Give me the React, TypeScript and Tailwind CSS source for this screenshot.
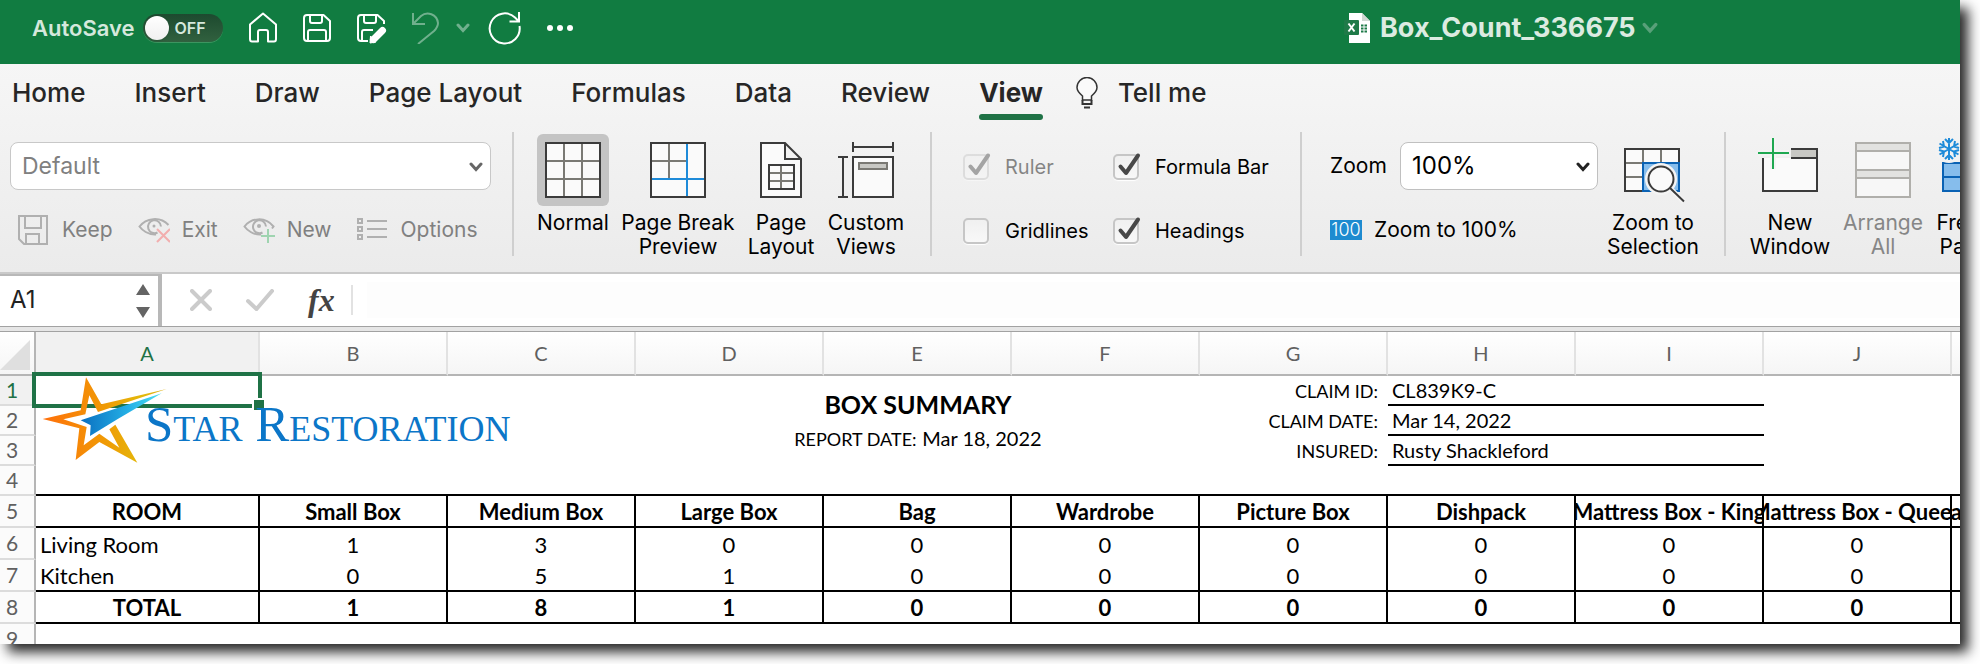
import type { ReactNode } from "react";

const TABS = ["Home", "Insert", "Draw", "Page Layout", "Formulas", "Data", "Review", "View"];

const COLUMNS = ["A", "B", "C", "D", "E", "F", "G", "H", "I", "J", "K"];

const BOX_TYPES = [
  "Small Box",
  "Medium Box",
  "Large Box",
  "Bag",
  "Wardrobe",
  "Picture Box",
  "Dishpack",
  "Mattress Box - King",
  "Mattress Box - Queen",
  "Mattress Box - Cal King",
];

const ROOMS = [
  { name: "Living Room", counts: [1, 3, 0, 0, 0, 0, 0, 0, 0, 0] },
  { name: "Kitchen", counts: [0, 5, 1, 0, 0, 0, 0, 0, 0, 0] },
];

const TOTALS = [1, 8, 1, 0, 0, 0, 0, 0, 0, 0];

const CLAIM = [
  { label: "CLAIM ID:", value: "CL839K9-C" },
  { label: "CLAIM DATE:", value: "Mar 14, 2022" },
  { label: "INSURED:", value: "Rusty Shackleford" },
];

function Chevron({ className }: { className: string }) {
  return (
    <svg viewBox="0 0 14 10" fill="none" stroke="currentColor" strokeWidth="3" className={className} aria-hidden>
      <path d="M2 2l5 5.500 5-5.500" strokeLinecap="round" />
    </svg>
  );
}

function TitleBar() {
  return (
    <header className="flex h-16 items-start bg-[#117c41] text-white">
      <div className="flex h-14 flex-1 items-center pl-8">
        <label htmlFor="autosave" className="text-[22px] font-semibold text-[#d5e8dc]">
          AutoSave
        </label>
        <button
          id="autosave"
          type="button"
          role="switch"
          aria-checked="false"
          className="ml-2 flex h-7 w-20 items-center rounded-full bg-gradient-to-b from-[#1d4a2f] to-[#31613f] pl-0.5 text-base font-semibold text-[#d5e8dc] shadow-[0_1px_0_#3c9560]"
        >
          <span className="mr-1.5 size-6 rounded-full bg-gradient-to-b from-white to-[#f0f0f0] shadow" />
          OFF
        </button>
        <button type="button" aria-label="Home" className="ml-6">
          <svg viewBox="0 0 32 32" className="size-8" fill="none" stroke="white" strokeWidth="2" strokeLinejoin="round">
            <path d="M3 12.500L16 1.500l13 11V27q0 2.500-2 2.500h-6V20q0-2-2-2h-6q-2 0-2 2v9.500H5q-2 0-2-2.500z" />
          </svg>
        </button>
        <button type="button" aria-label="Save" className="ml-[22px]">
          <svg viewBox="0 0 32 32" className="size-8" fill="none" stroke="white" strokeWidth="2" strokeLinejoin="round">
            <path d="M6 3h16.500L29 9v17q0 3-3 3H6q-3 0-3-3V6q0-3 3-3z" />
            <path d="M9 3v6q0 2 2 2h8q2 0 2-2V3M7 29V20q0-2 2-2h14q2 0 2 2v9" />
          </svg>
        </button>
        <button type="button" aria-label="Save as" className="ml-[22px]">
          <svg viewBox="0 0 32 32" className="size-8" fill="none" stroke="white" strokeWidth="2" strokeLinejoin="round">
            <path d="M13 29H6q-3 0-3-3V6q0-3 3-3h16.500L29 9v3" />
            <path d="M9 3v6q0 2 2 2h8q2 0 2-2V3M7 29V20q0-2 2-2h9" />
            <path d="M27.500 18.500L18.500 27.500" strokeWidth="7" strokeLinecap="round" />
            <path d="M15.500 24l-.5 7 6-1z" fill="white" strokeWidth="1" />
          </svg>
        </button>
        <button type="button" aria-label="Undo" className="ml-[23px] opacity-40">
          <svg viewBox="0 0 32 32" className="size-8" fill="none" stroke="white" strokeWidth="2">
            <path d="M3 1v11h12M3 12L11 4C17-1 27 2 28 11c0 4-2 6-4 8L8 32" />
          </svg>
        </button>
        <button type="button" aria-label="Undo history" className="ml-3.5 opacity-40">
          <Chevron className="h-[10px] w-[14px]" />
        </button>
        <button type="button" aria-label="Redo" className="ml-[18px]">
          <svg viewBox="0 0 34 34" className="size-[34px]" fill="none" stroke="white" strokeWidth="2">
            <path d="M31.500 15A15 15 0 1 1 27 6.500L30.500 10M31 1v9.500h-9.500" />
          </svg>
        </button>
        <button type="button" aria-label="More" className="ml-6">
          <svg viewBox="0 0 28 8" className="h-2 w-7" fill="white">
            <circle cx="4" cy="4" r="3" />
            <circle cx="14" cy="4" r="3" />
            <circle cx="24" cy="4" r="3" />
          </svg>
        </button>
      </div>
      <div className="flex h-14 w-[616px] items-center">
        <svg viewBox="0 0 26 30" className="h-[30px] w-[26px]" aria-hidden>
          <path d="M5 0h13l8 8v22H5z" fill="white" />
          <path d="M18 0l8 8h-8z" fill="#cfd8d2" />
          <rect y="7" width="15" height="15" rx="1" fill="#1f7a48" />
          <path d="M4.500 10.500l6 8M10.500 10.500l-6 8" stroke="white" strokeWidth="2" />
          <path d="M17 12.500h6M17 15.500h6M17 18.500h6" stroke="#1f7a48" strokeWidth="2" strokeDasharray="2.500 1" />
        </svg>
        <h1 className="ml-2.5 text-[27px] font-bold text-[#dcebe1]">Box_Count_336675</h1>
        <Chevron className="ml-1.5 h-3 w-4 text-[#58a079]" />
      </div>
    </header>
  );
}

function Tabs() {
  return (
    <nav className="flex h-[68px] items-start gap-[49px] pl-3 pt-[13px] text-[26px] leading-8 font-medium whitespace-nowrap text-[#262626]">
      {TABS.map((tab) => (
        <button key={tab} type="button" className={tab === "View" ? "font-bold" : ""}>
          {tab}
          {tab === "View" && <span className="mt-[5px] block h-1.5 rounded-full bg-[#1f7246]" />}
        </button>
      ))}
      <button type="button" className="-ml-4 flex items-center gap-5">
        <svg viewBox="0 0 22 32" className="h-8 w-[22px]" fill="none" stroke="#333" strokeWidth="1.500">
          <path d="M6.500 23v-4C3 16 1 14 1 10.500a10 10 0 0 1 20 0C21 14 19 16 15.500 19v4z" fill="#fafafa" />
          <path d="M6.500 23v4h9v-4M8 30.500h6" strokeWidth="2" />
        </svg>
        Tell me
      </button>
    </nav>
  );
}

function Divider() {
  return <div className="w-0.5 shrink-0 self-stretch bg-[#cfcfcf]" />;
}

type ToolProps = { icon: ReactNode; lines: string[]; width: string; active?: boolean; disabled?: boolean };

function Tool({ icon, lines, width, active, disabled }: ToolProps) {
  return (
    <button
      type="button"
      disabled={disabled}
      className={`flex shrink-0 flex-col items-center pt-0.5 ${width} ${disabled ? "text-[#868686]" : "text-black"}`}
    >
      <span className={`mb-[5px] rounded-md ${active ? "bg-[#c4c4c4]" : ""}`}>
        <svg viewBox="0 0 72 72" className="size-[72px]" fill="none" stroke="#3b3b3b" strokeWidth="2">
          {icon}
        </svg>
      </span>
      {lines.map((line) => (
        <span key={line} className="leading-6 whitespace-nowrap">
          {line}
        </span>
      ))}
    </button>
  );
}

const normalIcon = (
  <>
    <rect x="9" y="9" width="54" height="54" fill="#fafafa" />
    <path d="M27 10v52M45 10v52M10 27h52M10 45h52" stroke="#7a7974" />
  </>
);

const pageBreakIcon = (
  <>
    <rect x="9" y="9" width="54" height="54" fill="#fafafa" />
    <path d="M27 10v34M10 27h34" stroke="#7a7974" />
    <path d="M45 10v52M10 45h52" stroke="#1e8bd9" />
  </>
);

const pageLayoutIcon = (
  <>
    <path d="M16 9h24l16 16v38H16zM40 9v16h16" fill="#fafafa" />
    <path d="M36 32v22M25 39h24M25 47h24" stroke="#7a7974" />
    <rect x="24" y="31" width="25" height="24" />
  </>
);

const customViewsIcon = (
  <>
    <path d="M23 8v10M63 8v10M23 13h40M8 23h10M8 63h10M13 23v40" />
    <rect x="23" y="23" width="40" height="40" fill="#fafafa" />
    <rect x="29" y="29" width="28" height="6" fill="#c8c8c4" stroke="#7a7974" />
  </>
);

const zoomSelectionIcon = (
  <>
    <rect x="8" y="15" width="54" height="42" fill="#fafafa" />
    <path d="M26 16v40M44 16v40M9 29h52M9 43h52" stroke="#7a7974" />
    <rect x="26" y="29" width="36" height="28" fill="#86bdec" stroke="#0a62b4" />
    <circle cx="44" cy="45" r="16" fill="#f4f4f4" stroke="none" />
    <path d="M53 54l14 14" stroke="#f4f4f4" strokeWidth="5" />
    <circle cx="44" cy="45" r="12.500" fill="#fafafa" />
    <path d="M53 54l14 13.500" />
  </>
);

const newWindowIcon = (
  <>
    <path d="M9 24v33h54V15H37v9z" fill="#fafafa" stroke="none" />
    <path d="M9 24v33h54V15H37" />
    <path d="M37 15h26v9H37z" fill="#c8c8c4" stroke="none" />
    <path d="M37 15h26v9H37" />
    <path d="M19 4v31M4 19h31" stroke="#f4f4f4" strokeWidth="6" />
    <path d="M19 4v31M4 19h31" stroke="#1fa851" />
  </>
);

const arrangeIcon = (
  <g stroke="#b0afab">
    <rect x="9" y="9" width="54" height="54" fill="#f7f7f7" />
    <path d="M9 9h54v8H9zM9 36h54v8H9z" fill="#e2e2e0" />
  </g>
);

const freezeIcon = (
  <>
    <path d="M9 29h54v28H9z" fill="#86bdec" stroke="#0a62b4" />
    <path d="M9 43h54M27 29v28" stroke="#0a62b4" />
    <circle cx="15" cy="15" r="14" fill="#f2f2f2" stroke="none" />
    <path
      d="M15 4v22M5.500 9.500l19 11M24.500 9.500l-19 11M11 5l4 4 4-4M11 25l4-4 4 4M5 14l5-1.500L9 7M25 14l-5-1.500L21 7M5 16l5 1.500L9 23M25 16l-5 1.500L21 23"
      stroke="#1e8bd9"
    />
  </>
);

function Check({ id, label, checked, disabled }: { id: string; label: string; checked?: boolean; disabled?: boolean }) {
  return (
    <div className={`flex items-center ${disabled ? "opacity-45" : ""}`}>
      <span className="relative mr-4 size-[26px]">
        <input
          id={id}
          type="checkbox"
          defaultChecked={checked}
          disabled={disabled}
          className="block size-[26px] appearance-none rounded-[5px] border-2 border-[#c6c6c6] bg-gradient-to-b from-[#f0f0f0] to-[#f8f8f8] shadow-[0_1px_1px_white]"
        />
        {checked && (
          <svg viewBox="0 0 26 26" className="pointer-events-none absolute inset-0 overflow-visible" fill="none">
            <path d="M7.500 12.500l5.500 6.500L25 1.500" stroke="#484848" strokeWidth="4" strokeLinecap="round" strokeLinejoin="round" />
          </svg>
        )}
      </span>
      <label htmlFor={id}>{label}</label>
    </div>
  );
}

function SheetViewGroup() {
  return (
    <div className="w-[481px] shrink-0 pt-2.5 text-[#808080]">
      <div className="relative">
        <select
          aria-label="Sheet view"
          className="h-12 w-full appearance-none rounded-lg border border-[#c8c8c8] bg-white pl-[11px] text-[23px] opacity-100"
        >
          <option>Default</option>
        </select>
        <Chevron className="pointer-events-none absolute top-5 right-2 h-[10px] w-[14px] text-[#666]" />
      </div>
      <div className="mt-[25px] flex h-[30px] items-center pl-2">
        <button type="button" className="flex items-center gap-3.5">
          <svg viewBox="0 0 30 30" className="size-[30px]" fill="none" stroke="#b0b0b0" strokeWidth="2">
            <path d="M1 1h28v28H6l-5-5zM7 1v12h16V1M8 29V19h13v10" />
          </svg>
          Keep
        </button>
        <button type="button" className="ml-[25px] flex items-center gap-3">
          <svg viewBox="0 0 32 26" className="h-[26px] w-8" fill="none" stroke="#b0b0b0" strokeWidth="2">
            <path d="M18 17.500C10 18 4 13 1.500 9.500 8 1 22-1 30.500 8" />
            <path d="M19.500 15.500A6.500 6.500 0 1 1 23 9.500" />
            <circle cx="16" cy="9" r="1.500" fill="#b0b0b0" stroke="none" />
            <path d="M19 12l13 13M32 12L19 25" stroke="#f2aeae" />
          </svg>
          Exit
        </button>
        <button type="button" className="ml-[25px] flex items-center gap-3">
          <svg viewBox="0 0 32 26" className="h-[26px] w-8" fill="none" stroke="#b0b0b0" strokeWidth="2">
            <path d="M18 17.500C10 18 4 13 1.500 9.500 8 1 22-1 30.500 9.500l-1.500 2" />
            <path d="M19.500 15.500A6.500 6.500 0 1 1 23 9.500" />
            <circle cx="16" cy="9" r="2" fill="#b0b0b0" stroke="none" />
            <path d="M25 12v14M18 19h14" stroke="#9fd4b0" />
          </svg>
          New
        </button>
        <button type="button" className="ml-[25px] flex items-center gap-3.5">
          <svg viewBox="0 0 30 24" className="h-6 w-[30px]" fill="none" stroke="#b0b0b0" strokeWidth="2">
            <path d="M1 1h4v4H1zM1 9h4v4H1zM1 17h4v4H1zM10 3h20M10 11h20M10 19h20" />
          </svg>
          Options
        </button>
      </div>
    </div>
  );
}

function ZoomGroup() {
  return (
    <div className="w-[268px] shrink-0 pt-2.5">
      <div className="flex items-center justify-between">
        <label htmlFor="zoom">Zoom</label>
        <span className="relative w-[198px]">
          <select
            id="zoom"
            className="h-12 w-full appearance-none rounded-lg border border-[#c0c0c0] bg-white pl-[11px] text-2xl"
          >
            <option>100%</option>
          </select>
          <Chevron className="pointer-events-none absolute top-5 right-2 h-[10px] w-[14px] text-[#222]" />
        </span>
      </div>
      <button type="button" className="mt-[25px] flex h-[30px] items-center gap-3">
        <span className="w-8 bg-[#1e8bd0] text-center text-lg leading-5 font-light text-white">100</span>
        Zoom to 100%
      </button>
    </div>
  );
}

function Ribbon() {
  return (
    <div className="border-b-2 border-[#c9c9c9] bg-gradient-to-b from-[#f6f6f6] to-[#ebebeb]">
      <Tabs />
      <div className="flex h-[140px] overflow-hidden pb-4 pl-2.5 text-[21px]">
        <SheetViewGroup />
        <div className="w-[21px] shrink-0" />
        <Divider />
        <div className="flex shrink-0 gap-3 pr-[25px] pl-[23px]">
          <Tool icon={normalIcon} lines={["Normal"]} width="w-[72px]" active />
          <Tool icon={pageBreakIcon} lines={["Page Break", "Preview"]} width="w-[114px]" />
          <Tool icon={pageLayoutIcon} lines={["Page", "Layout"]} width="w-[68px]" />
          <Tool icon={customViewsIcon} lines={["Custom", "Views"]} width="w-[78px]" />
        </div>
        <Divider />
        <div className="grid w-[368px] shrink-0 grid-cols-[150px_1fr] content-start gap-y-[38px] pt-[22px] pl-[31px] text-xl leading-[26px] whitespace-nowrap">
          <Check id="ruler" label="Ruler" checked disabled />
          <Check id="formula-bar" label="Formula Bar" checked />
          <Check id="gridlines" label="Gridlines" />
          <Check id="headings" label="Headings" checked />
        </div>
        <Divider />
        <div className="flex shrink-0 gap-[9px] pr-[25px] pl-7">
          <ZoomGroup />
          <Tool icon={zoomSelectionIcon} lines={["Zoom to", "Selection"]} width="w-[92px]" />
        </div>
        <Divider />
        <div className="flex shrink-0 gap-[15px] pl-[25px]">
          <Tool icon={newWindowIcon} lines={["New", "Window"]} width="w-[78px]" />
          <Tool icon={arrangeIcon} lines={["Arrange", "All"]} width="w-[78px]" disabled />
          <Tool icon={freezeIcon} lines={["Freeze", "Panes"]} width="w-[66px]" />
        </div>
      </div>
    </div>
  );
}

function FormulaBar() {
  return (
    <div className="flex h-[52px] items-center bg-white">
      <div className="flex h-full w-[162px] items-center justify-between border-t-2 border-r-4 border-[#b8b8b8] pr-2">
        <input aria-label="Name box" defaultValue="A1" className="w-24 pb-0.5 pl-2.5 text-2xl text-[#222] outline-none" />
        <svg viewBox="0 0 14 34" className="h-[34px] w-[14px]" fill="#646464" aria-hidden>
          <path d="M7 0l7 11H0zM7 34l7-11H0z" />
        </svg>
      </div>
      <button type="button" aria-label="Cancel" className="ml-7">
        <svg viewBox="0 0 22 22" className="size-[22px]" stroke="#cbcbcb" strokeWidth="4" strokeLinecap="round">
          <path d="M2 2l18 18M20 2L2 20" />
        </svg>
      </button>
      <button type="button" aria-label="Enter" className="ml-[34px]">
        <svg viewBox="0 0 28 22" className="h-[22px] w-7" fill="none" stroke="#cbcbcb" strokeWidth="4" strokeLinecap="round">
          <path d="M2 12l8.500 8L26 2" />
        </svg>
      </button>
      <button
        type="button"
        aria-label="Insert function"
        className="ml-[34px] font-['Liberation_Serif',serif] text-[32px] leading-8 font-bold text-[#444] italic"
      >
        fx
      </button>
      <div className="ml-4 h-[30px] w-0.5 bg-[#e2e2e2]" />
      <input aria-label="Formula" className="ml-3.5 h-9 min-w-0 flex-1 bg-[#fdfdfd] outline-none" />
    </div>
  );
}

function Logo() {
  return (
    <div className="absolute top-0 left-1.5 flex items-start">
      <svg viewBox="36 30 381 264" className="h-[88px] w-[127px]" aria-hidden>
        <defs>
          <linearGradient id="star" x1="0" x2="1">
            <stop offset="0" stopColor="#ff6f0a" />
            <stop offset="0.500" stopColor="#f09a05" />
            <stop offset="0.800" stopColor="#e3b90a" />
            <stop offset="1" stopColor="#dcae1c" />
          </linearGradient>
          <linearGradient id="streak" x1="0" x2="1">
            <stop offset="0" stopColor="#0a6fc0" />
            <stop offset="0.600" stopColor="#25b1e6" />
            <stop offset="1" stopColor="#4fe0f2" />
          </linearGradient>
        </defs>
        <path
          d="M168 34L214 115L410 69L204 138L178 88L166 145L100 160L170 183L161 238L208 203L268 245L238 190L256 176L322 290L208 228L137 282L148 187L38 159L152 133Z"
          fill="url(#star)"
        />
        <path d="M395 82L152 163L182 178L180 210L262 160Z" fill="url(#streak)" />
      </svg>
      <span className="-ml-6 mt-5 font-['Liberation_Serif',serif] text-[51px] leading-[56px] font-normal whitespace-nowrap text-[#0b76c8] [font-variant:small-caps]">
        Star Restoration
      </span>
    </div>
  );
}

function RowHead({ n, active }: { n: number; active?: boolean }) {
  return (
    <th
      scope="row"
      className={`border-r-2 border-b-2 border-r-[#b5b5b5] border-b-[#dcdcdc] p-0 pl-1.5 text-left text-[21px] font-normal ${
        active ? "bg-[#f1f1f1] text-[#1f7246]" : "bg-[#fbfbfb] text-[#606060]"
      }`}
    >
      {n}
    </th>
  );
}

function Count({ value, last }: { value: number; last?: boolean }) {
  return <td className={`border-r-2 border-black p-0 pt-0.5 text-center ${last ? "border-b-2" : ""}`}>{value}</td>;
}

function Sheet() {
  return (
    <div className="h-[312px] overflow-hidden bg-white">
      <table className="w-[2140px] table-fixed border-separate border-spacing-0 font-['Lato',sans-serif] text-[22px] leading-7 text-black">
        <colgroup>
          <col className="w-9" />
          <col className="w-[224px]" />
          {BOX_TYPES.map((type) => (
            <col key={type} className="w-[188px]" />
          ))}
        </colgroup>
        <thead>
          <tr className="h-11 bg-gradient-to-b from-white to-[#f5f5f5] text-xl text-[#606060]">
            <td className="border-r-2 border-b-2 border-[#b5b5b5] py-0 pr-1 pl-0">
              <svg viewBox="0 0 30 30" className="mt-1 size-[30px]" aria-hidden>
                <path d="M30 0v30H0z" fill="#dfdfdf" />
              </svg>
            </td>
            {COLUMNS.map((col) => (
              <th
                key={col}
                scope="col"
                className={`border-r-2 border-b-2 border-r-[#e2e2e2] border-b-[#b5b5b5] p-0 font-normal ${
                  col === "A" ? "bg-[#f1f1f1] text-[#1f7246]" : ""
                }`}
              >
                {col}
              </th>
            ))}
          </tr>
        </thead>
        <tbody>
          {CLAIM.map((item, i) => (
            <tr key={item.label} className="h-[30px]">
              <RowHead n={i + 1} active={i === 0} />
              {i === 0 ? (
                <td className="relative">
                  <div className="absolute -top-1 -right-0.5 -bottom-0.5 -left-1 border-4 border-[#1f7246]" />
                  <div className="absolute -right-1 -bottom-1 size-3 border-t-2 border-l-2 border-white bg-[#1f7246]" />
                  <Logo />
                </td>
              ) : (
                <td />
              )}
              <td colSpan={2} />
              {i === 0 && (
                <td colSpan={3} rowSpan={4} className="border-b-2 border-black p-0 text-center align-top">
                  <div className="pt-3 text-[25px] leading-8 font-bold">BOX SUMMARY</div>
                  <div className="pt-1">
                    <span className="text-lg">REPORT DATE:</span> <span className="text-xl">Mar 18, 2022</span>
                  </div>
                </td>
              )}
              <td className="p-0 pr-2.5 text-right text-lg leading-7">{item.label}</td>
              <td colSpan={2} className="border-b-2 border-black py-0 pr-0 pl-1 text-xl leading-7">
                {item.value}
              </td>
              <td colSpan={2} />
            </tr>
          ))}
          <tr className="h-[30px]">
            <RowHead n={4} />
            <td colSpan={3} className="border-b-2 border-black" />
            <td colSpan={5} className="border-b-2 border-black" />
          </tr>
          <tr className="h-8">
            <RowHead n={5} />
            <th scope="col" className="border-r-2 border-b-2 border-black p-0 pt-0.5">
              ROOM
            </th>
            {BOX_TYPES.map((type) => (
              <th key={type} scope="col" className="border-r-2 border-b-2 border-black p-0 pt-0.5">
                <div className="flex justify-center overflow-hidden whitespace-nowrap">{type}</div>
              </th>
            ))}
          </tr>
          {ROOMS.map((room, i) => {
            const last = i === ROOMS.length - 1;
            return (
              <tr key={room.name} className="h-8">
                <RowHead n={6 + i} />
                <td className={`border-r-2 border-black p-0 pt-0.5 pl-1 ${last ? "border-b-2" : ""}`}>{room.name}</td>
                {room.counts.map((value, c) => (
                  <Count key={BOX_TYPES[c]} value={value} last={last} />
                ))}
              </tr>
            );
          })}
          <tr className="h-8 font-bold">
            <RowHead n={8} />
            <th scope="row" className="border-r-2 border-b-2 border-black p-0 pt-0.5">
              TOTAL
            </th>
            {TOTALS.map((value, c) => (
              <Count key={BOX_TYPES[c]} value={value} last />
            ))}
          </tr>
          <tr className="h-8">
            <RowHead n={9} />
            <td colSpan={11} />
          </tr>
        </tbody>
      </table>
    </div>
  );
}

export default function App() {
  return (
    <div className="overflow-hidden bg-white pr-5 pb-5 font-['Inter',sans-serif]">
      <main className="shadow-[8px_8px_12px_rgba(0,0,0,0.85)]">
        <TitleBar />
        <Ribbon />
        <FormulaBar />
        <div className="h-1.5 border-y border-[#a2a2a2] bg-[#e6e6e6]" />
        <Sheet />
      </main>
    </div>
  );
}
